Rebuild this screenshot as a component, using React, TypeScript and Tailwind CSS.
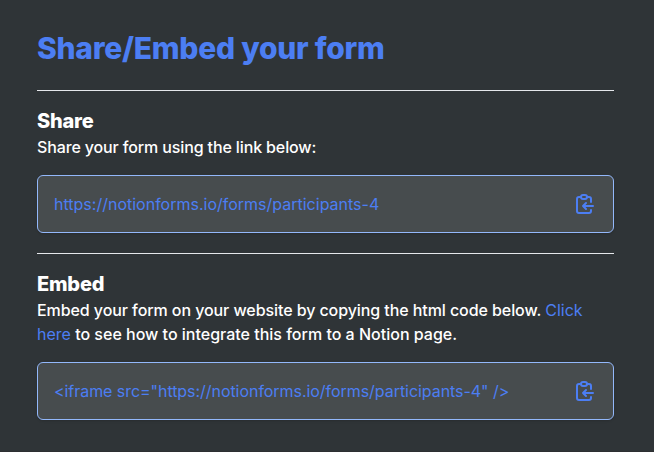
import type { ReactNode } from "react";

const FORM_URL = "https://notionforms.io/forms/participants-4";

export default function App() {
  return (
    <main className="h-[452px] w-[654px] overflow-hidden border-b border-[#2d2f32] bg-[#2f3437] pt-7 pr-10 pl-[37px] font-['Inter',sans-serif] text-base font-medium text-white">
      <h1 className="text-3xl leading-10 font-extrabold tracking-[-0.26px] text-[#4c7ef3]">
        Share/Embed your form
      </h1>

      <Section title="Share" className="mt-[22px]">
        <p className="tracking-[-0.13px]">Share your form using the link below:</p>
        <CopyBox content={FORM_URL} />
      </Section>

      <Section title="Embed" className="mt-5">
        <p>
          <span className="tracking-[-0.08px]">
            Embed your form on your website by copying the html code below.{" "}
          </span>
          <a href="#" className="font-normal text-[#4c7ef3]">
            Click here
          </a>{" "}
          to see how to integrate this form to a Notion page.
        </p>
        <CopyBox
          content={`<iframe src="${FORM_URL}" />`}
          className="tracking-[-0.05px]"
        />
      </Section>
    </main>
  );
}

function Section({
  title,
  className,
  children,
}: {
  title: string;
  className: string;
  children: ReactNode;
}) {
  return (
    <section className={`border-t border-gray-200 pt-4 ${className}`}>
      <h2 className="text-xl leading-7 font-extrabold tracking-[-0.2px]">{title}</h2>
      {children}
    </section>
  );
}

function CopyBox({
  content,
  className = "",
}: {
  content: string;
  className?: string;
}) {
  return (
    <div className="mt-4 flex h-[58px] items-center justify-between rounded-md border border-[#93b8fb] bg-[#474c4e] px-4 text-[#4c7ef3] shadow-sm">
      <p className={`font-normal ${className}`}>{content}</p>
      <button aria-label="Copy" className="text-[#4c7ef3]">
        <svg
          className="h-6 w-6"
          viewBox="0 0 24 24"
          fill="none"
          stroke="currentColor"
          strokeWidth="2"
          strokeLinecap="round"
          strokeLinejoin="round"
        >
          <path d="M8 5H6a2 2 0 00-2 2v12a2 2 0 002 2h10a2 2 0 002-2v-1M8 5a2 2 0 002 2h2a2 2 0 002-2M8 5a2 2 0 012-2h2a2 2 0 012 2m0 0h2a2 2 0 012 2v3m2 4H10m0 0l3-3m-3 3l3 3" />
        </svg>
      </button>
    </div>
  );
}
